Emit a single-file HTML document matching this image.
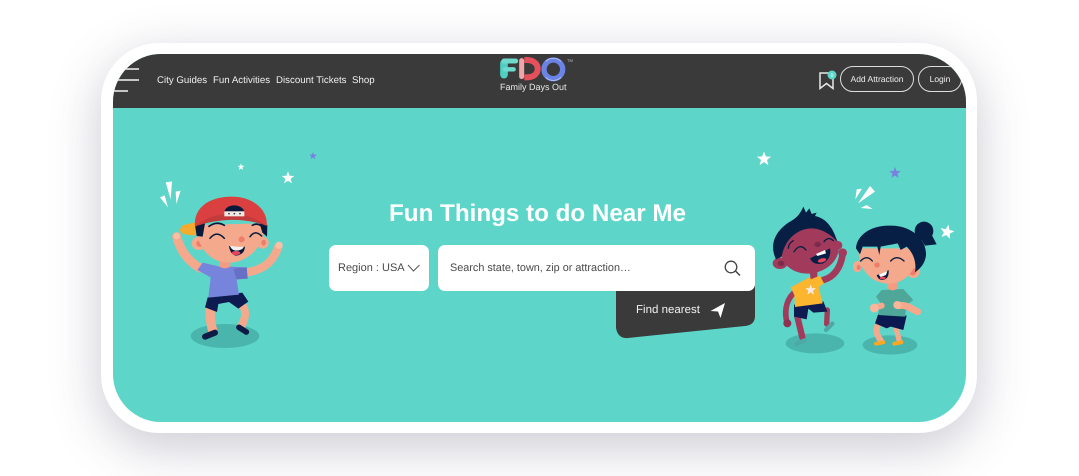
<!DOCTYPE html>
<html>
<head>
<meta charset="utf-8">
<style>
html,body{margin:0;padding:0;background:#fff;}
body{width:1079px;height:476px;position:relative;overflow:hidden;font-family:"Liberation Sans",sans-serif;text-rendering:geometricPrecision;}
#frame{position:absolute;left:101px;top:43px;width:876px;height:390px;background:#fff;border-radius:58px;box-shadow:0 14px 50px rgba(60,60,90,.27);}
#screen{position:absolute;left:113px;top:54px;width:853px;height:368px;background:#5dd6c9;border-radius:48px;overflow:hidden;}
#bar{position:absolute;left:0;top:0;width:100%;height:54px;background:#3a3a3a;}
.t{position:absolute;white-space:nowrap;}
.nav{top:74.500px;font-size:9.700px;line-height:12px;color:#f0f0f0;}
.pill{position:absolute;top:12px;height:24px;border:1.5px solid #ddd;border-radius:14px;color:#eee;font-size:8.5px;line-height:24px;text-align:center;}
.box{position:absolute;background:#fff;border-radius:7px;top:245px;height:46px;}
svg{position:absolute;left:0;top:0;}
.art{filter:blur(.35px);}
</style>
</head>
<body>
<div id="frame"></div>
<div id="screen">
  <div id="bar"></div>
  <svg width="853" height="54" viewBox="0 0 853 54"><path d="M0 15H26M0 26H26M0 37H15" stroke="#f5f5f5" stroke-width="1.600" fill="none"/></svg>
  <div class="pill" style="left:727px;width:72px">Add Attraction</div>
  <div class="pill" style="left:805px;width:42px">Login</div>
</div>

<div class="t nav" style="left:157px">City Guides</div>
<div class="t nav" style="left:213px">Fun Activities</div>
<div class="t nav" style="left:276px">Discount Tickets</div>
<div class="t nav" style="left:352px">Shop</div>
<div class="t" style="left:500px;top:82px;font-size:9px;line-height:11px;color:#e8e8e8">Family Days Out</div>
<div class="t" style="left:567px;top:58px;font-size:4px;line-height:5px;color:#bbb">TM</div>

<div class="t" style="left:337.500px;width:400px;text-align:center;top:199px;font-size:24.200px;line-height:29px;font-weight:bold;color:#fff">Fun Things to do Near Me</div>

<svg class="art" width="1079" height="476" viewBox="0 0 1079 476">
  <defs>
    <path id="st" d="M0-1L.25-.34L.95-.31L.4.13L.59.81L0 .42L-.59.81L-.4.13L-.95-.31L-.25-.34Z"/>
  </defs>
  <!-- find nearest tab -->
  <path d="M616 285H755V316Q755 325 745 326L628 338Q618 339 616 328Z" fill="#3a3a3a"/>

  <!-- logo -->
  <g transform="translate(495 52) scale(.33333)" fill="none">
    <path d="M27 68V34" stroke="#4fcfc3" stroke-width="23" stroke-linecap="round"/>
    <path d="M27 27H62" stroke="#6fd9cd" stroke-width="15" stroke-linecap="round"/>
    <path d="M30 52H56" stroke="#6fd9cd" stroke-width="13" stroke-linecap="round"/>
    <path d="M88 24H95C118 24 128 38 128 50C128 64 118 76 95 76H88" stroke="#e4505c" stroke-width="18"/>
    <path d="M80 26V74" stroke="#f0a5a8" stroke-width="15" stroke-linecap="round"/>
    <circle cx="175" cy="52" r="28" stroke="#6b83e4" stroke-width="16"/>
    <path d="M152 28A33 33 0 0 1 198 28M152 76A33 33 0 0 0 198 76" stroke="#b4c0f2" stroke-width="3"/>
  </g>
  <!-- bookmark -->
  <path d="M820 73H833V88.500L826.500 83.500L820 88.500Z" fill="none" stroke="#e8e8e8" stroke-width="1.500"/>
  <circle cx="832" cy="75" r="4.500" fill="#5dd6c9"/>
  <text x="832" y="77" font-family="Liberation Sans" font-size="5" fill="#fff" text-anchor="middle">0</text>

  <!-- stars -->
  <use href="#st" transform="translate(288 178) scale(6.500)" fill="#fff"/>
  <use href="#st" transform="translate(241 167) scale(3.500)" fill="#fff"/>
  <use href="#st" transform="translate(313 156) scale(4)" fill="#7c7fe0"/>
  <use href="#st" transform="translate(764 159) scale(7.500)" fill="#fff"/>
  <use href="#st" transform="translate(895 173) scale(6)" fill="#7c7fe0"/>
  <use href="#st" transform="translate(947 232) rotate(12) scale(7.500)" fill="#fff"/>
  <!-- sparkles -->
  <g transform="translate(140 140) scale(.33333)" fill="#fff">
    <path d="M77 127L96 124L92 178Z M107 155L122 152L109 192Z M60 172L74 166L84 202Z"/>
  </g>
  <g transform="translate(750 140) scale(.33333)" fill="#fff">
    <path d="M360 138L375 155L324 190Z M320 148L336 146L316 178Z M350 195L368 207L332 204Z"/>
  </g>

  <!-- Boy -->
  <g transform="translate(165 190) scale(.33333)" stroke-linecap="round" fill="none">
    <ellipse cx="180" cy="438" rx="103" ry="36" fill="#4ab5ad"/>
    <path d="M136 355C134 380 138 405 144 425" stroke="#f5a98c" stroke-width="28"/>
    <path d="M232 345C246 365 240 390 228 410" stroke="#f5a98c" stroke-width="24"/>
    <path d="M120 440L150 428" stroke="#0d1b45" stroke-width="18"/>
    <path d="M222 412L244 426" stroke="#0d1b45" stroke-width="17"/>
    <path d="M128 322L232 308L250 335L220 356L192 336L160 342L156 366L120 352Z" fill="#0d1b50"/>
    <path d="M35 140C45 180 70 215 105 234" stroke="#f5a98c" stroke-width="27"/>
    <path d="M340 170C325 215 295 240 245 247" stroke="#f5a98c" stroke-width="25"/>
    <circle cx="35" cy="138" r="10" fill="#f9c0a4"/>
    <circle cx="342" cy="166" r="11" fill="#f9c0a4"/>
    <path d="M113 218L165 230H200L245 232L248 266L215 268L222 314L130 323L137 262L97 240Z" fill="#7784dc"/>
    <path d="M205 236L245 232L248 266L215 268Z" fill="#6670c4"/>
    <path d="M163 210H196V230Q180 240 163 230Z" fill="#f39c82"/>
    <path d="M90 97L55 105Q42 115 46 125Q52 135 92 137Z" fill="#f5aa30"/>
    <ellipse cx="102" cy="160" rx="22" ry="20" fill="#f5a98c"/>
    <ellipse cx="293" cy="158" rx="18" ry="18" fill="#f5a98c"/>
    <ellipse cx="105" cy="161" rx="11" ry="10" fill="#ee7d6b"/>
    <ellipse cx="296" cy="158" rx="7" ry="9" fill="#ee7d6b"/>
    <path d="M92 105C95 170 135 218 190 218C250 218 298 170 300 100Z" fill="#f5a98c"/>
    <path d="M90 105L120 100L113 140L95 138Z" fill="#071a3c"/>
    <path d="M284 100L307 105L306 140L292 128Z" fill="#071a3c"/>
    <path d="M90 110C85 55 130 20 200 20C265 20 310 60 305 108C270 85 225 75 190 77C150 78 115 90 90 110Z" fill="#d9403f"/>
    <path d="M90 110C115 88 150 73 190 72C230 70 270 82 305 108C270 94 230 88 190 90C150 92 115 100 90 110Z" fill="#c23a3c"/>
    <path d="M178 64C185 40 230 40 238 64Z" fill="#071a3c"/>
    <rect x="178" y="64" width="60" height="15" fill="#f0e8e4"/>
    <g fill="#333"><circle cx="192" cy="71" r="2.500"/><circle cx="208" cy="71" r="2.500"/><circle cx="225" cy="71" r="2.500"/></g>
    <path d="M132 109Q155 92 178 106M262 106Q275 98 290 108" stroke="#071a3c" stroke-width="5"/>
    <path d="M135 145Q155 120 178 145M255 140Q270 118 290 138" stroke="#071a3c" stroke-width="4.500"/>
    <circle cx="230" cy="148" r="9" fill="#ee7d6b"/>
    <path d="M192 168Q215 175 240 170Q238 195 212 197Q195 192 192 168Z" fill="#071a3c"/>
    <path d="M195 167Q215 172 237 170Q232 182 212 182Q198 180 195 167Z" fill="#f4f0ee"/>
    <ellipse cx="213" cy="189" rx="13" ry="6" fill="#e9435f"/>
  </g>

  <!-- Kid 1 -->
  <g transform="translate(770 200) scale(.33333)" stroke-linecap="round" fill="none">
    <ellipse cx="135" cy="430" rx="88" ry="30" fill="#4ab5ad"/>
    <path d="M82 350L97 412" stroke="#a23a5c" stroke-width="19"/>
    <path d="M80 431L104 421" stroke="#4ea8a4" stroke-width="13"/>
    <path d="M172 330L170 372" stroke="#a23a5c" stroke-width="16"/>
    <path d="M168 390L187 371" stroke="#4ea8a4" stroke-width="13"/>
    <path d="M70 280C45 305 44 340 51 368" stroke="#a23a5c" stroke-width="17"/>
    <circle cx="52" cy="370" r="12" fill="#8e3252"/>
    <path d="M72 314L160 304L172 335L130 338L115 326L110 358L72 350Z" fill="#0d1b50"/>
    <path d="M160 240C190 232 212 205 218 162" stroke="#a23a5c" stroke-width="20"/>
    <circle cx="218" cy="158" r="13" fill="#a23a5c"/>
    <path d="M62 262L118 232L150 228L162 250L146 262L158 310L75 321L73 285Z" fill="#fbb52f"/>
    <use href="#st" transform="translate(122 270) scale(17)" fill="#f6e9e3"/>
    <path d="M118 210H142V230L122 238Z" fill="#a23a5c"/>
    <ellipse cx="30" cy="190" rx="22" ry="17" fill="#a23a5c"/>
    <ellipse cx="33" cy="190" rx="10" ry="8" fill="#7c2b4c"/>
    <ellipse cx="204" cy="136" rx="13" ry="13" fill="#a23a5c"/>
    <ellipse cx="120" cy="150" rx="87" ry="70" transform="rotate(-12 120 150)" fill="#a23a5c"/>
    <path d="M18 178C-5 130 20 90 60 65C80 55 92 40 100 20L108 38L118 25L125 42L140 38L135 48C170 55 190 85 202 125C180 100 150 85 125 85C85 85 45 115 35 170Z" fill="#071f44"/>
    <path d="M55 145Q55 130 70 122" stroke="#071f44" stroke-width="4"/>
    <path d="M72 155Q90 128 108 150M162 125Q175 108 190 122" stroke="#071f44" stroke-width="4"/>
    <ellipse cx="143" cy="133" rx="10" ry="8" fill="#7c2b4c"/>
    <path d="M120 175Q150 160 180 145Q185 175 160 190Q130 198 120 175Z" fill="#071f44"/>
    <path d="M138 162L165 150L168 160L142 168Z" fill="#fff"/>
    <ellipse cx="156" cy="181" rx="13" ry="6" transform="rotate(-15 156 181)" fill="#e9435f"/>
  </g>

  <!-- Girl -->
  <g transform="translate(850 215) scale(.33333)" stroke-linecap="round" fill="none">
    <ellipse cx="120" cy="390" rx="82" ry="29" fill="#4ab5ad"/>
    <path d="M85 328C72 350 85 365 93 378" stroke="#f5a98c" stroke-width="18"/>
    <path d="M138 338L148 378" stroke="#f5a98c" stroke-width="16"/>
    <path d="M78 386L100 382" stroke="#f9a825" stroke-width="12"/>
    <path d="M133 386L154 382" stroke="#f9a825" stroke-width="12"/>
    <path d="M85 296L170 302L160 345L122 335L110 340L75 325Z" fill="#0a1a50"/>
    <path d="M95 225L160 222L190 255L170 270L165 305L85 300L90 262L78 245Z" fill="#4ea799"/>
    <path d="M145 272C170 268 180 280 203 290" stroke="#f5a98c" stroke-width="21"/>
    <path d="M75 278L95 272" stroke="#f5a98c" stroke-width="18"/>
    <circle cx="73" cy="279" r="13" fill="#f8b79a"/>
    <circle cx="142" cy="270" r="12" fill="#f8b79a"/>
    <path d="M112 200H142V220Q128 232 112 220Z" fill="#f39c82"/>
    <ellipse cx="22" cy="155" rx="13" ry="17" fill="#f5a98c"/>
    <ellipse cx="26" cy="157" rx="6" ry="8" fill="#ee7d6b"/>
    <ellipse cx="190" cy="167" rx="20" ry="22" fill="#f5a98c"/>
    <ellipse cx="188" cy="170" rx="11" ry="11" fill="#ee7d6b"/>
    <path d="M25 100C25 170 70 208 120 206C165 204 205 165 205 100Z" fill="#f5a98c"/>
    <circle cx="222" cy="48" r="28" fill="#071f44"/>
    <path d="M230 30L260 88L225 92L200 50Z" fill="#071f44"/>
    <path d="M18 100C20 60 65 30 120 32C180 30 230 70 228 120C225 150 205 165 195 172C200 140 190 115 170 95L152 105L143 85L92 95L88 120L82 95L38 95L30 118Z" fill="#071f44"/>
    <path d="M32 138Q50 118 67 138M122 138Q140 118 162 138" stroke="#071f44" stroke-width="4"/>
    <circle cx="81" cy="150" r="8" fill="#ee7d6b"/>
    <path d="M80 180Q100 175 116 165Q118 192 98 195Q84 195 80 180Z" fill="#071f44"/>
    <path d="M86 179L112 168L108 180L92 186Z" fill="#fff"/>
    <ellipse cx="98" cy="189" rx="9" ry="4" fill="#e9435f"/>
  </g>
</svg>

<div class="box" style="left:329px;width:100px"></div>
<div class="box" style="left:438px;width:317px"></div>
<div class="t" style="left:338px;top:262px;font-size:11px;line-height:13px;color:#4a4a4a">Region : USA</div>
<div class="t" style="left:450px;top:262px;font-size:10.850px;line-height:13px;color:#4a4a4a">Search state, town, zip or attraction…</div>
<div class="t" style="left:636px;top:304px;font-size:11.500px;line-height:13px;color:#f2f2f2">Find nearest</div>

<svg width="1079" height="476" viewBox="0 0 1079 476">
  <path d="M408 265L413.500 271L419.500 265" fill="none" stroke="#555" stroke-width="1"/>
  <circle cx="731" cy="267" r="5.800" fill="none" stroke="#444" stroke-width="1.300"/>
  <path d="M735.500 271L740 275.500" stroke="#444" stroke-width="1.500" fill="none"/>
  <path d="M725 303L710.500 311L718 311.500L720.500 318Z" fill="#fff"/>
</svg>
</body>
</html>
